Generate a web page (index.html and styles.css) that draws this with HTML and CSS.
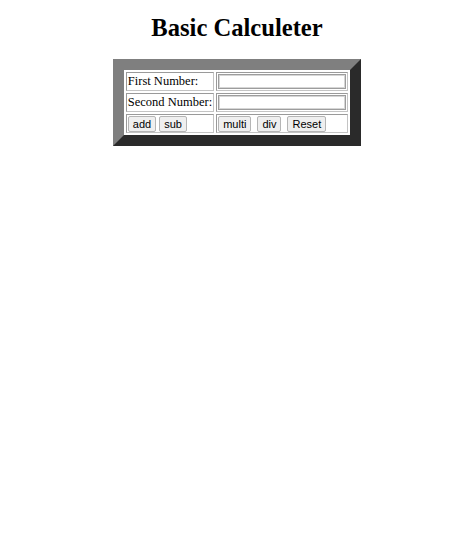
FILE: index.html
```html
<!DOCTYPE html>
<html>
<head>
<meta charset="utf-8">
<title>Basic Calculeter</title>
<link rel="stylesheet" href="styles.css">
</head>
<body>
<h1 class="title">Basic Calculeter</h1>
<table class="calc">
  <tr>
    <td class="label">First Number:</td>
    <td><input class="field" type="text"></td>
  </tr>
  <tr>
    <td class="label">Second Number:</td>
    <td><input class="field" type="text"></td>
  </tr>
  <tr>
    <td class="actions"><div class="btns btns-left"><button class="btn">add</button><button class="btn">sub</button></div></td>
    <td class="actions"><div class="btns btns-right"><button class="btn">multi</button><button class="btn">div</button><button class="btn">Reset</button></div></td>
  </tr>
</table>
</body>
</html>
```
FILE: styles.css
```css
html, body {
  margin: 0;
  padding: 0;
  background: #ffffff;
}
body {
  font-family: "Liberation Serif", "Times New Roman", serif;
  font-size: 12px;
  color: #000;
}
.title {
  font-size: 24.6px;
  font-weight: bold;
  text-align: center;
  margin: 14px 0 17px;
  line-height: normal;
}
.calc {
  margin: 0 auto;
  border-style: solid;
  border-width: 11px;
  border-color: #7f7f7f #2a2a2a #2a2a2a #7f7f7f;
  border-spacing: 2px;
  background: #ffffff;
}
.calc td {
  border: 1px solid #a9a9a9;
  border-color: #9a9a9a #c4c4c4 #c4c4c4 #9a9a9a;
  padding: 1px;
  vertical-align: middle;
  white-space: nowrap;
  line-height: 15px;
  background: #fff;
}
.calc td.actions {
  padding-top: 1px;
  padding-bottom: 0;
}
.label {
  font-size: 12.5px;
  padding-left: 1px;
  padding-right: 0;
}
.field {
  display: block;
  box-sizing: border-box;
  width: 128px;
  height: 15px;
  margin: 0;
  padding: 0 1px;
  border: 1px solid #9d9d9d;
  box-shadow: inset 0 0 0 1px #d6d6d6;
  background: #fff;
  font-family: "Liberation Sans", Arial, sans-serif;
  font-size: 10px;
}
.btns {
  display: flex;
  align-items: center;
}
.btns-left {
  gap: 3px;
}
.btns-right {
  gap: 6px;
}
.btn {
  box-sizing: border-box;
  height: 16px;
  margin: 0;
  padding: 0 4px;
  border: 1px solid #b5b5b5;
  border-radius: 2px;
  background: #efefef;
  color: #000;
  font-family: "Liberation Sans", Arial, sans-serif;
  font-size: 11px;
  line-height: 14px;
}
```
